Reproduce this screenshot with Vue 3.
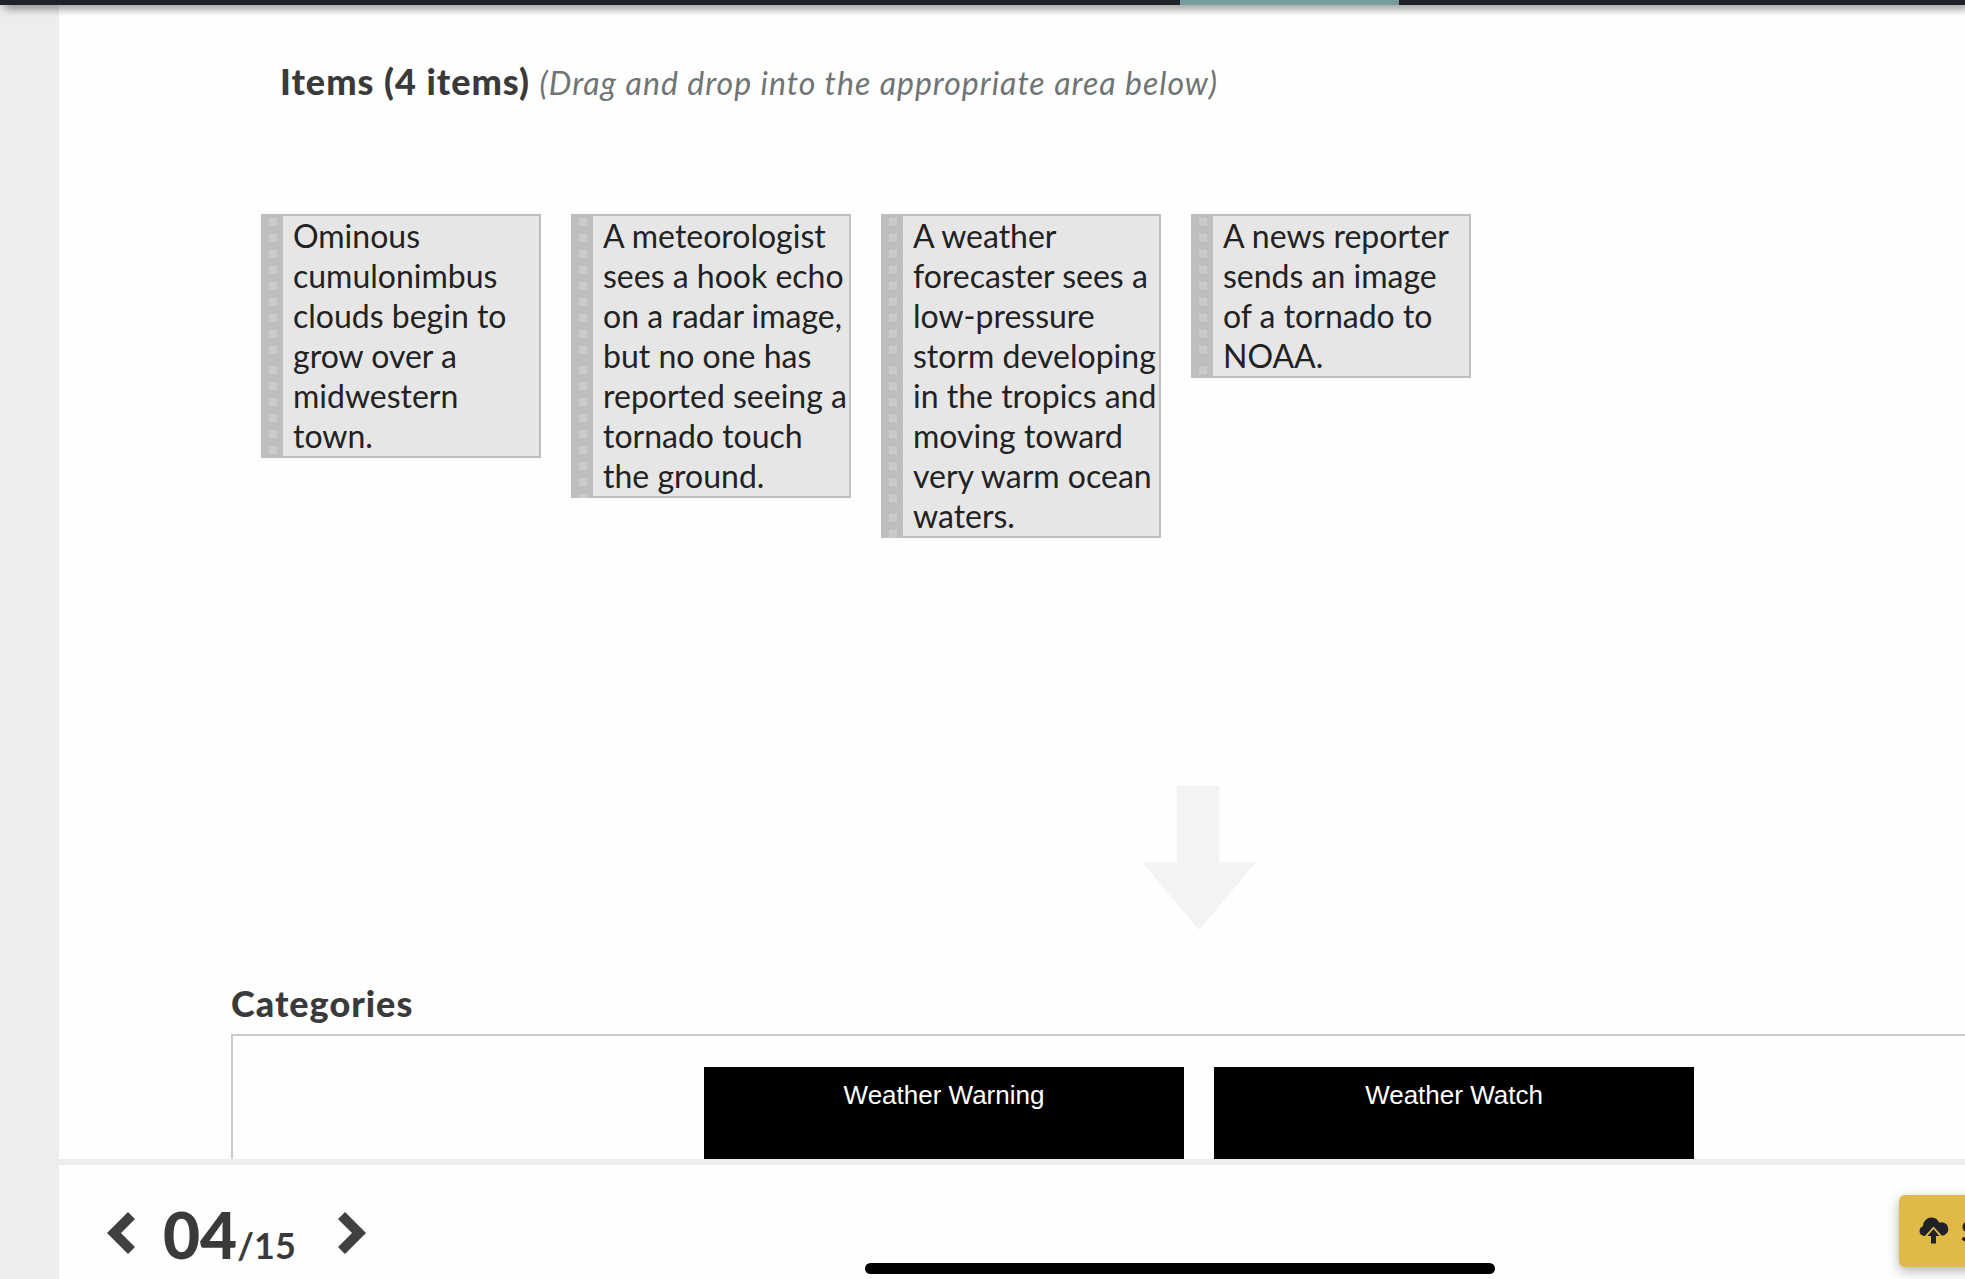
<script setup>
const items = [
  'Ominous cumulonimbus clouds begin to grow over a midwestern town.',
  'A meteorologist sees a hook echo on a radar image, but no one has reported seeing a tornado touch the ground.',
  'A weather forecaster sees a low-pressure storm developing in the tropics and moving toward very warm ocean waters.',
  'A news reporter sends an image of a tornado to NOAA.'
]
const categories = ['Weather Warning', 'Weather Watch']
</script>

<template>
  <div class="app">
    <header class="topbar"><span class="topbar-active"></span></header>

    <main class="page">
      <div class="activity">
        <h2 class="heading items-heading">
          Items (4 items) <em>(Drag and drop into the appropriate area below)</em>
        </h2>

        <ul class="items">
          <li v-for="item in items" :key="item" class="item" draggable="true">
            <span class="handle"></span>
            <span class="label">{{ item }}</span>
          </li>
        </ul>

        <svg class="arrow" viewBox="0 0 114 144" aria-hidden="true">
          <path d="M35 0H77V76H114L57 144L0 76H35Z" fill="#f3f3f3" />
        </svg>

        <h2 class="heading">Categories</h2>
        <div class="categories">
          <section v-for="name in categories" :key="name" class="category">
            <h3>{{ name }}</h3>
          </section>
        </div>
      </div>
    </main>

    <footer class="footer">
      <nav class="pager">
        <button type="button" class="step" aria-label="Previous">
          <svg viewBox="0 0 28 42"><path d="M21 0L28 7L14 21L28 35L21 42L0 21Z" fill="#404040" /></svg>
        </button>
        <p class="count"><strong>04</strong>/15</p>
        <button type="button" class="step" aria-label="Next">
          <svg viewBox="0 0 28 42"><path d="M7 0L0 7L14 21L0 35L7 42L28 21Z" fill="#404040" /></svg>
        </button>
      </nav>
      <button type="button" class="submit">
        <svg viewBox="0 0 30 28" aria-hidden="true">
          <g fill="#1f2328">
            <circle cx="12.500" cy="9" r="8.500" />
            <circle cx="22.500" cy="12" r="6.800" />
            <circle cx="5.500" cy="14" r="5" />
            <path d="M5 10H23V18.800H5Z" />
          </g>
          <path d="M14.500 9.500L25 21H4Z" fill="#dfba49" />
          <path d="M14.500 12L20.500 19H17V26.500H12V19H8.500Z" fill="#1f2328" />
        </svg>
        <span>S</span>
      </button>
      <span class="home-indicator"></span>
    </footer>
  </div>
</template>

<style>
body {
  margin: 0;
}
</style>

<style scoped>
.app {
  display: flex;
  flex-direction: column;
  height: 100vh;
  box-sizing: border-box;
  overflow: hidden;
  background: #ededed;
  color: #3a3a3a;
  font-family: Lato, sans-serif;
  text-rendering: optimizeLegibility;
}
.topbar {
  position: relative;
  z-index: 1;
  flex: none;
  display: flex;
  height: 5px;
  padding-left: 1180px;
  background: #1f2328;
  box-shadow: 4px 2px 10px rgba(0, 0, 0, 0.75);
}
.topbar-active {
  width: 219px;
  background: #759da0;
}
.page {
  flex: 1;
  min-height: 0;
  margin-left: 59px;
  overflow: hidden;
  background: #fefefe;
}
.activity {
  margin-right: -202px;
  padding: 54px 0 0 172px;
}
.heading {
  margin: 0;
  font-family: "Lato Black", "Lato Heavy", Lato, sans-serif;
  font-size: 36px;
  line-height: 44px;
  font-weight: 900;
  letter-spacing: 1px;
}
.items-heading {
  padding-left: 49px;
}
.heading em {
  color: #6f7474;
  font-family: Lato, sans-serif;
  font-size: 32px;
  font-weight: 400;
}
.items {
  display: flex;
  align-items: flex-start;
  gap: 30px;
  height: 572px;
  margin: 0;
  padding: 109px 0 0 30px;
  box-sizing: border-box;
  list-style: none;
}
.item {
  display: flex;
  width: 280px;
  cursor: move;
}
.handle {
  flex: none;
  width: 22px;
  background: repeating-linear-gradient(#bebebe 0 4px, #cbcbcb 4px 12px, #bebebe 12px 16px) 8px 0 / 8px 148px repeat-y #bebebe;
}
.label {
  flex: 1;
  padding-left: 10px;
  border: 2px solid #bebebe;
  border-left: 0;
  background: #e6e6e6;
  color: #222;
  font-size: 32px;
  line-height: 40px;
}
.arrow {
  display: block;
  width: 114px;
  height: 144px;
  margin: 109px auto 51px;
}
.categories {
  display: flex;
  justify-content: center;
  gap: 30px;
  height: 400px;
  margin-top: 9px;
  padding-top: 31px;
  border: 2px solid #ccc;
}
.category {
  width: 480px;
  background: #000;
}
.category h3 {
  margin: 12px 0 0;
  color: #fff;
  font: 400 26px/32px "Liberation Sans", Arial, sans-serif;
  text-align: center;
}
.footer {
  position: relative;
  flex: none;
  display: flex;
  justify-content: space-between;
  align-items: flex-start;
  height: 114px;
  margin-left: 59px;
  border-top: 6px solid #ededed;
  background: #fefefe;
}
.pager {
  display: flex;
  padding: 30px 0 0 48px;
}
.step {
  display: flex;
  align-items: flex-start;
  width: 28px;
  height: 76px;
  padding: 17px 0 0;
  border: 0;
  background: none;
  cursor: pointer;
}
.step svg {
  display: block;
  width: 28px;
  height: 42px;
}
.count {
  width: 174px;
  margin: 0 1px 0 28px;
  font-size: 36px;
  line-height: 80px;
  font-weight: 700;
}
.count strong {
  font-family: "Lato Black", Lato, sans-serif;
  font-size: 64px;
  font-weight: 900;
}
.submit {
  display: flex;
  align-items: center;
  gap: 12px;
  width: 240px;
  height: 72px;
  margin: 30px -174px 0 0;
  padding: 0 0 0 20px;
  border: 0;
  border-radius: 6px;
  background: #dfba49;
  box-shadow: 0 4px 12px rgba(0, 0, 0, 0.3);
  color: #1f2328;
  font: 700 28px/36px Lato, sans-serif;
  cursor: pointer;
}
.submit svg {
  flex: none;
  width: 30px;
  height: 28px;
}
.home-indicator {
  position: absolute;
  right: 470px;
  bottom: 5px;
  width: 630px;
  height: 11px;
  border-radius: 6px;
  background: #000;
}
</style>
